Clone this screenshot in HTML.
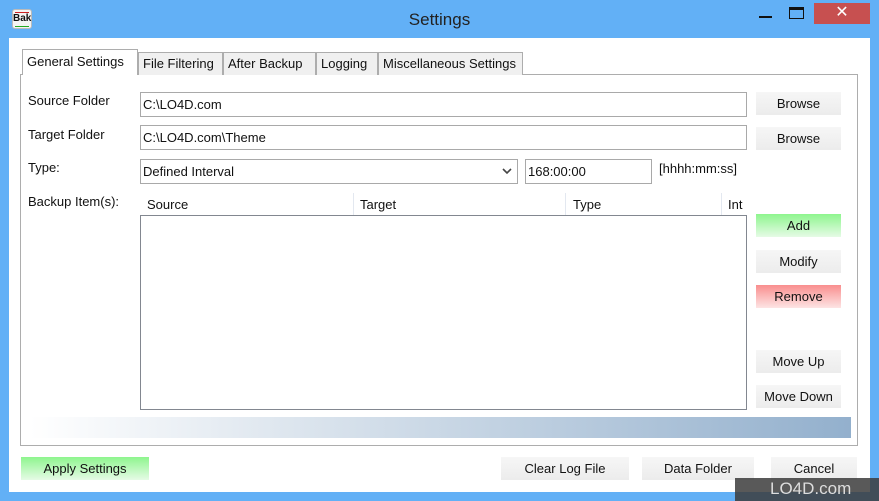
<!DOCTYPE html>
<html><head><meta charset="utf-8"><style>
*{margin:0;padding:0;box-sizing:border-box}
body{width:879px;height:501px;background:#62b0f6;font-family:"Liberation Sans",sans-serif;font-size:13px;color:#111;position:relative;overflow:hidden}
.a{position:absolute}
.client{left:9px;top:38px;width:861px;height:454px;background:#fff}
.title{left:0;top:10px;width:879px;text-align:center;font-size:17px;color:#222}
.tab{position:absolute;top:52px;height:23px;background:#f0f0f0;border:1px solid #adadad;border-bottom:none;padding:3px 4px 0;white-space:nowrap}
.panel{left:20px;top:74px;width:838px;height:372px;border:1px solid #adadad;background:#fff}
.inp{position:absolute;border:1px solid #a9a9a9;background:#fff;padding:4px 3px 0 2px;height:25px}
.btn{position:absolute;width:85px;height:23px;text-align:center;padding-top:4px;background:linear-gradient(#f6f6f6,#ececec);}
.lbl{position:absolute}
</style></head><body>
<div class="a client"></div>
<div class="a title">Settings</div>
<div class="a" style="left:12px;top:9px;width:20px;height:20px;border-radius:3px;background:#f4f4f4;border:1px solid #bbb;font-size:10px;font-weight:bold;text-align:center;line-height:18px;">Bak<div class="a" style="left:2px;top:2px;width:14px;height:1px;background:#c22"></div><div class="a" style="left:2px;top:16px;width:14px;height:1px;background:#2a2"></div></div>
<div class="a" style="left:759px;top:16px;width:13px;height:2px;background:#111"></div>
<div class="a" style="left:789px;top:7px;width:15px;height:12px;border:1px solid #111;border-top:3px solid #111"></div>
<div class="a" style="left:814px;top:3px;width:56px;height:21px;background:#c75050;color:#fff;text-align:center;font-size:16px;line-height:20px">✕</div>

<div class="a panel"></div>
<div class="tab" style="left:22px;top:49px;height:26px;width:116px;background:#fff;border-color:#adadad;padding-top:4px">General Settings</div>
<div class="tab" style="left:138px;width:85px">File Filtering</div>
<div class="tab" style="left:223px;width:93px">After Backup</div>
<div class="tab" style="left:316px;width:62px">Logging</div>
<div class="tab" style="left:378px;width:145px">Miscellaneous Settings</div>

<div class="lbl" style="left:28px;top:93px">Source Folder</div>
<div class="lbl" style="left:28px;top:127px">Target Folder</div>
<div class="lbl" style="left:28px;top:160px">Type:</div>
<div class="lbl" style="left:28px;top:194px">Backup Item(s):</div>
<div class="inp" style="left:140px;top:92px;width:607px">C:\LO4D.com</div>
<div class="inp" style="left:140px;top:125px;width:607px">C:\LO4D.com\Theme</div>
<div class="inp" style="left:140px;top:159px;width:378px">Defined Interval<svg style="position:absolute;right:5px;top:8px" width="10" height="7"><path d="M1 1 L5 5 L9 1" stroke="#444" stroke-width="1.6" fill="none"/></svg></div>
<div class="inp" style="left:525px;top:159px;width:127px">168:00:00</div>
<div class="lbl" style="left:659px;top:161px">[hhhh:mm:ss]</div>
<div class="btn" style="left:756px;top:92px">Browse</div>
<div class="btn" style="left:756px;top:127px">Browse</div>

<div class="a" style="left:140px;top:193px;width:607px;height:23px;background:#fff;overflow:hidden">
<div class="a" style="left:7px;top:4px">Source</div>
<div class="a" style="left:213px;top:0;width:1px;height:23px;background:#e3e8f0"></div>
<div class="a" style="left:220px;top:4px">Target</div>
<div class="a" style="left:425px;top:0;width:1px;height:23px;background:#e3e8f0"></div>
<div class="a" style="left:433px;top:4px">Type</div>
<div class="a" style="left:581px;top:0;width:1px;height:23px;background:#e3e8f0"></div>
<div class="a" style="left:588px;top:4px">Int</div>
</div>
<div class="a" style="left:140px;top:215px;width:607px;height:195px;border:1px solid #828790;background:#fff"></div>

<div class="btn" style="left:756px;top:214px;background:linear-gradient(#8ef58e,#e6fbe6)">Add</div>
<div class="btn" style="left:756px;top:250px">Modify</div>
<div class="btn" style="left:756px;top:285px;background:linear-gradient(#f98e8e,#fde4e4)">Remove</div>
<div class="btn" style="left:756px;top:350px">Move Up</div>
<div class="btn" style="left:756px;top:385px">Move Down</div>

<div class="a" style="left:30px;top:417px;width:821px;height:21px;background:linear-gradient(90deg,#fff,#dfe7ef 30%,#93b0cd)"></div>

<div class="btn" style="left:21px;top:457px;width:128px;background:linear-gradient(#8ef58e,#e6fbe6)">Apply Settings</div>
<div class="btn" style="left:501px;top:457px;width:128px">Clear Log File</div>
<div class="btn" style="left:642px;top:457px;width:112px">Data Folder</div>
<div class="btn" style="left:771px;top:457px;width:86px">Cancel</div>
<div class="a" style="left:735px;top:478px;width:144px;height:23px;background:rgba(60,60,60,.85);color:#ddd;font-size:17px;padding:1px 0 0 35px">LO4D.com</div>
</body></html>
